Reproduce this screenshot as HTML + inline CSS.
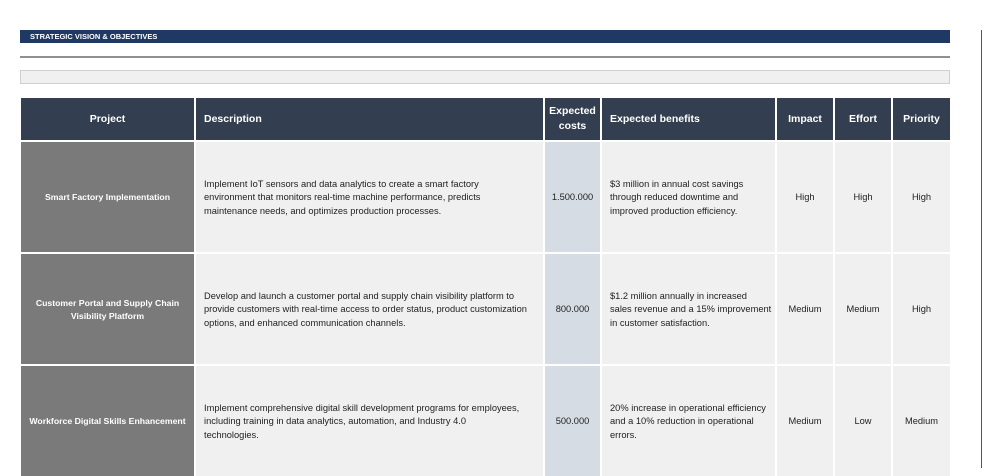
<!DOCTYPE html>
<html><head><meta charset="utf-8"><style>
body{margin:0;width:1005px;height:468px;background:#fff;position:relative;overflow:hidden;font-family:"Liberation Sans",sans-serif;}
.a{position:absolute;box-sizing:border-box;}
.h{background:#333f50;color:#fff;font-weight:bold;font-size:10.5px;display:flex;align-items:center;justify-content:center;text-align:center;line-height:15px;}
.c{background:#f0f0f0;color:#222;font-size:9.3px;line-height:13.5px;display:flex;align-items:center;justify-content:center;text-align:center;white-space:nowrap;padding-top:2px;}
.l{justify-content:flex-start;text-align:left;padding-left:8px;}
.p{background:#7a7a7a;color:#fff;font-weight:bold;font-size:8.7px;}
.k{background:#d6dce4;}
</style></head><body>
<div class="a" style="left:20px;top:30px;width:930px;height:13px;background:#203864;color:#fff;font-size:7.5px;font-weight:bold;padding-left:10px;line-height:13px;">STRATEGIC VISION &amp; OBJECTIVES</div>
<div class="a" style="left:20px;top:56px;width:930px;height:2px;background:#909090;"></div>
<div class="a" style="left:20px;top:70px;width:930px;height:14px;background:#f0f0f0;border:1px solid #d0d0d0;"></div>
<div class="a" style="left:981px;top:30px;width:1px;height:438px;background:#555;"></div>

<div class="a h" style="left:21px;top:98px;width:173px;height:42px;">Project</div>
<div class="a h l" style="left:196px;top:98px;width:347px;height:42px;">Description</div>
<div class="a h" style="left:545px;top:98px;width:55px;height:42px;">Expected<br>costs</div>
<div class="a h l" style="left:602px;top:98px;width:173px;height:42px;">Expected benefits</div>
<div class="a h" style="left:777px;top:98px;width:56px;height:42px;">Impact</div>
<div class="a h" style="left:835px;top:98px;width:56px;height:42px;">Effort</div>
<div class="a h" style="left:893px;top:98px;width:57px;height:42px;">Priority</div>

<div class="a c p" style="left:21px;top:142px;width:173px;height:110px;">Smart Factory Implementation</div>
<div class="a c l" style="left:196px;top:142px;width:347px;height:110px;">Implement IoT sensors and data analytics to create a smart factory<br>environment that monitors real-time machine performance, predicts<br>maintenance needs, and optimizes production processes.</div>
<div class="a c k" style="left:545px;top:142px;width:55px;height:110px;">1.500.000</div>
<div class="a c l" style="left:602px;top:142px;width:173px;height:110px;">$3 million in annual cost savings<br>through reduced downtime and<br>improved production efficiency.</div>
<div class="a c" style="left:777px;top:142px;width:56px;height:110px;">High</div>
<div class="a c" style="left:835px;top:142px;width:56px;height:110px;">High</div>
<div class="a c" style="left:893px;top:142px;width:57px;height:110px;">High</div>

<div class="a c p" style="left:21px;top:254px;width:173px;height:110px;">Customer Portal and Supply Chain<br>Visibility Platform</div>
<div class="a c l" style="left:196px;top:254px;width:347px;height:110px;">Develop and launch a customer portal and supply chain visibility platform to<br>provide customers with real-time access to order status, product customization<br>options, and enhanced communication channels.</div>
<div class="a c k" style="left:545px;top:254px;width:55px;height:110px;">800.000</div>
<div class="a c l" style="left:602px;top:254px;width:173px;height:110px;">$1.2 million annually in increased<br>sales revenue and a 15% improvement<br>in customer satisfaction.</div>
<div class="a c" style="left:777px;top:254px;width:56px;height:110px;">Medium</div>
<div class="a c" style="left:835px;top:254px;width:56px;height:110px;">Medium</div>
<div class="a c" style="left:893px;top:254px;width:57px;height:110px;">High</div>

<div class="a c p" style="left:21px;top:366px;width:173px;height:110px;">Workforce Digital Skills Enhancement</div>
<div class="a c l" style="left:196px;top:366px;width:347px;height:110px;">Implement comprehensive digital skill development programs for employees,<br>including training in data analytics, automation, and Industry 4.0<br>technologies.</div>
<div class="a c k" style="left:545px;top:366px;width:55px;height:110px;">500.000</div>
<div class="a c l" style="left:602px;top:366px;width:173px;height:110px;">20% increase in operational efficiency<br>and a 10% reduction in operational<br>errors.</div>
<div class="a c" style="left:777px;top:366px;width:56px;height:110px;">Medium</div>
<div class="a c" style="left:835px;top:366px;width:56px;height:110px;">Low</div>
<div class="a c" style="left:893px;top:366px;width:57px;height:110px;">Medium</div>
</body></html>
